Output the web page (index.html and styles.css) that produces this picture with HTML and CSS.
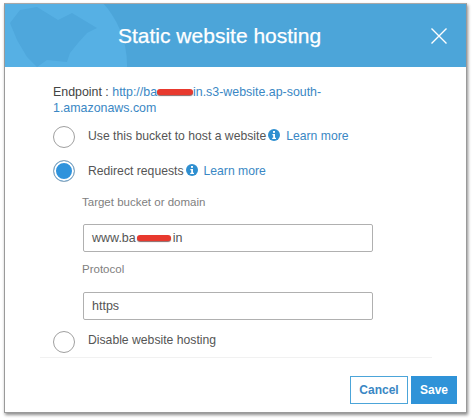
FILE: index.html
```
<!DOCTYPE html>
<html lang="en">
<head>
<meta charset="utf-8">
<title>Static website hosting</title>
<link rel="stylesheet" href="styles.css">
</head>
<body>
<div class="dialog">
  <header class="head">
    <svg class="globe" viewBox="0 0 130 64" aria-hidden="true">
      <circle cx="30" cy="61" r="92" fill="#56b0e4"/>
      <path d="M5 19 L15 6 L32 3 L45 11 L53 16 L67 9 L92 24 L82 29 L73 39 L65 49 L62 58 L42 56 L32 63 L22 53 L12 36 Z" fill="#4ea7dc"/>
    </svg>
    <h1 class="title">Static website hosting</h1>
    <svg class="close" viewBox="0 0 16 16" aria-hidden="true"><path d="M0.5 0.5 L15.5 15.5 M15.5 0.5 L0.5 15.5" stroke="#fff" stroke-width="1.4" fill="none"/></svg>
  </header>
  <div class="content">
    <p class="endpoint">Endpoint : <a class="link">http://ba<span class="redact r1"></span>in.s3-website.ap-south-<br>1.amazonaws.com</a></p>
    <div class="opt o1">
      <span class="radio"></span>
      <span class="opt-text">Use this bucket to host a website</span>
      <svg class="info" viewBox="0 0 12 12" aria-hidden="true"><circle cx="6" cy="6" r="6" fill="#2f8fd0"/><rect x="5" y="2" width="2" height="1.8" fill="#fff"/><path d="M4.4 5 H7 V8.8 H8 V10 H4.2 V8.8 H5.2 V6.2 H4.4 Z" fill="#fff"/></svg>
      <a class="link more">Learn more</a>
    </div>
    <div class="opt o2">
      <span class="radio on"></span>
      <span class="opt-text">Redirect requests</span>
      <svg class="info" viewBox="0 0 12 12" aria-hidden="true"><circle cx="6" cy="6" r="6" fill="#2f8fd0"/><rect x="5" y="2" width="2" height="1.8" fill="#fff"/><path d="M4.4 5 H7 V8.8 H8 V10 H4.2 V8.8 H5.2 V6.2 H4.4 Z" fill="#fff"/></svg>
      <a class="link more">Learn more</a>
    </div>
    <div class="fields">
      <div class="label l1">Target bucket or domain</div>
      <div class="input i1">www.ba<span class="redact r2"></span>in</div>
      <div class="label l2">Protocol</div>
      <div class="input i2">https</div>
    </div>
    <div class="opt o3">
      <span class="radio"></span>
      <span class="opt-text">Disable website hosting</span>
    </div>
  </div>
  <div class="divider"></div>
  <footer class="foot">
    <button class="btn cancel">Cancel</button>
    <button class="btn save">Save</button>
  </footer>
</div>
</body>
</html>
```
FILE: styles.css
```
* { box-sizing: border-box; }
html, body { margin: 0; background: #fff; }
body { width: 474px; height: 418px; overflow: hidden; padding: 3px 0 0 4px; font-family: "Liberation Sans", Arial, sans-serif; color: #555; }
.dialog { width: 463px; height: 410px; background: #fff; border: 1px solid #9a9a9a; border-top-color: #a8a8a8; box-shadow: 1px 2px 3px rgba(0,0,0,.45); }
.head { position: relative; height: 63px; background: #4ca5d9; display: flex; align-items: center; overflow: hidden; padding-left: 113px; }
.globe { position: absolute; left: 0; top: 0; width: 130px; height: 64px; }
.title { position: relative; margin: 0; font-size: 21px; font-weight: 400; color: #fff; line-height: 26px; -webkit-text-stroke: .25px #fff; white-space: nowrap; }
.close { width: 16px; height: 16px; margin-left: 110px; position: relative; }
.content { padding: 17px 0 0 48px; }
.endpoint { margin: 0; font-size: 12.4px; line-height: 16px; color: #444; }
.link { color: #3a87c4; }
.redact { display: inline-block; height: 6px; background: #e8392e; border-radius: 3px; vertical-align: 1px; box-shadow: 0 1px 1px rgba(60,0,0,.6); }
.r1 { width: 36px; }
.r2 { width: 34px; margin: 0 2px 0 1px; }
.opt { display: flex; align-items: flex-start; height: 22px; font-size: 12.2px; line-height: 16px; color: #555; }
.o1 { margin-top: 10px; }
.o2 { margin-top: 12px; }
.o3 { margin-top: 11px; }
.radio { flex: none; width: 22px; height: 22px; border-radius: 50%; border: 1px solid #a0a0a0; background: #fff; margin-right: 13px; }
.radio.on { background: #2f93dc; box-shadow: inset 0 0 0 2px #fff; border-color: #8fa8bc; }
.opt-text { margin-top: 2px; }
.o2 .opt-text { margin-top: 3px; }
.o3 .opt-text { margin-top: 1px; }
.info { width: 12px; height: 12px; margin: 3px 0 0 2px; flex: none; }
.o2 .info { margin-top: 4px; }
.more { margin: 2px 0 0 6px; }
.o2 .more { margin-top: 3px; }
.fields { padding-left: 30px; margin-top: 0; }
.label { font-size: 11.5px; line-height: 14px; color: #808080; }
.l1 { margin-top: 13px; margin-left: -1px; }
.l2 { margin-top: 10px; margin-left: -1px; }
.input { width: 290px; height: 28px; border: 1px solid #b0b0b0; border-radius: 2px; font-size: 12.5px; line-height: 26px; padding-left: 8px; color: #555; background: #fff; }
.i1 { margin-top: 15px; }
.i2 { margin-top: 16px; }
.divider { margin: 4px 0 0 35px; width: 392px; height: 1px; background: #f1f1f1; }
.foot { display: flex; justify-content: flex-end; gap: 3px; padding: 18px 9px 0 0; }
.btn { height: 28px; font-family: inherit; font-size: 12px; font-weight: 700; padding: 0; border-radius: 0; }
.cancel { width: 58px; background: #fff; border: 1px solid #4ca5d9; color: #3a87c4; }
.save { width: 46px; background: #2f93d8; border: 1px solid #2f93d8; color: #fff; }
```
